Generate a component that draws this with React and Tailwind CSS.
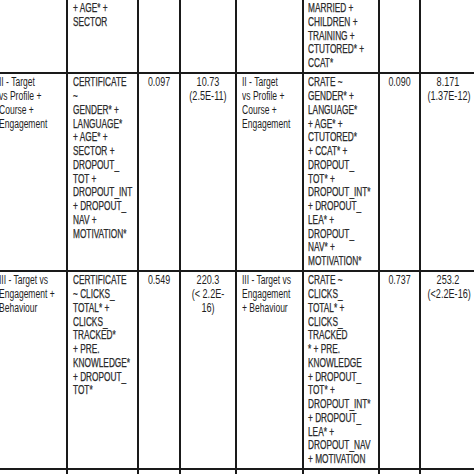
import React from "react";

const rows = [
  {
    cells: [
      ["I - Target vs", "Profile"],
      ["CERTIFICATE", "~", "GENDER* +", "LANGUAGE*", "+ AGE* +", "SECTOR"],
      ["0.041"],
      ["6.35", "(1.8E-06)"],
      ["I - Target vs", "Profile"],
      ["CRATE ~", "GENDER* +", "LANGUAGE*", "+ AGE* +", "MARRIED +", "CHILDREN +", "TRAINING +", "CTUTORED* +", "CCAT*"],
      ["0.052"],
      ["5.914", "(2.1E-07)"],
    ],
  },
  {
    cells: [
      ["II - Target", "vs Profile +", "Course +", "Engagement"],
      ["CERTIFICATE", "~", "GENDER* +", "LANGUAGE*", "+ AGE* +", "SECTOR +", "DROPOUT_", "TOT +", "DROPOUT_INT", "+ DROPOUT_", "NAV +", "MOTIVATION*"],
      ["0.097"],
      ["10.73", "(2.5E-11)"],
      ["II - Target", "vs Profile +", "Course +", "Engagement"],
      ["CRATE ~", "GENDER* +", "LANGUAGE*", "+ AGE* +", "CTUTORED*", "+ CCAT* +", "DROPOUT_", "TOT* +", "DROPOUT_INT*", "+ DROPOUT_", "LEA* +", "DROPOUT_", "NAV* +", "MOTIVATION*"],
      ["0.090"],
      ["8.171", "(1.37E-12)"],
    ],
  },
  {
    cells: [
      ["III - Target vs", "Engagement +", "Behaviour"],
      ["CERTIFICATE", "~ CLICKS_", "TOTAL* +", "CLICKS_", "TRACKED*", "+ PRE.", "KNOWLEDGE*", "+ DROPOUT_", "TOT*"],
      ["0.549"],
      ["220.3", "(< 2.2E-", "16)"],
      ["III - Target vs", "Engagement", "+ Behaviour"],
      ["CRATE ~", "CLICKS_", "TOTAL* +", "CLICKS_", "TRACKED", "* + PRE.", "KNOWLEDGE", "+ DROPOUT_", "TOT* +", "DROPOUT_INT*", "+ DROPOUT_", "LEA* +", "DROPOUT_NAV", "+ MOTIVATION"],
      ["0.737"],
      ["253.2", "(<2.2E-16)"],
    ],
  },
];

const cellClass = [
  "pl-[5px]",
  "pl-[5px]",
  "text-center",
  "text-center",
  "pl-[5px]",
  "pl-[4px]",
  "text-center",
  "text-center",
];

const lineClass = [
  "origin-left scale-x-[0.71] text-[#1e1e1e]",
  "origin-left scale-x-[0.69] text-[#2a2a2a] [-webkit-text-stroke:0.25px_#2a2a2a]",
  "origin-center scale-x-[0.74] text-[#1e1e1e]",
  "origin-center scale-x-[0.76] text-[#1e1e1e]",
  "origin-left scale-x-[0.71] text-[#1e1e1e]",
  "origin-left scale-x-[0.69] text-[#2a2a2a] [-webkit-text-stroke:0.25px_#2a2a2a]",
  "origin-center scale-x-[0.74] text-[#1e1e1e]",
  "origin-center scale-x-[0.76] text-[#1e1e1e]",
];

function Cell({ lines, idx }) {
  return (
    <div className={"bg-white pt-[2px] pb-[1.5px] leading-[13.75px] whitespace-nowrap " + cellClass[idx]}>
      {lines.map((l, i) => (
        <div key={i} className={lineClass[idx]}>
          {l}
        </div>
      ))}
    </div>
  );
}

export default function App() {
  return (
    <div className="w-[474px] h-[474px] overflow-hidden bg-white">
      <div className="grid grid-cols-[72px_69px_40px_54px_65px_74px_39px_54px] gap-[2px] p-[2px] bg-[#1a1a1a] w-max ml-[-8px] mt-[-57px] text-[12px] font-['Liberation_Sans',Arial,sans-serif]">
        {rows.map((r, ri) =>
          r.cells.map((c, ci) => <Cell key={ri + "-" + ci} lines={c} idx={ci} />)
        )}
        {Array.from({ length: 8 }).map((_, i) => (
          <div key={"e" + i} className="bg-white h-[24px]" />
        ))}
      </div>
    </div>
  );
}
